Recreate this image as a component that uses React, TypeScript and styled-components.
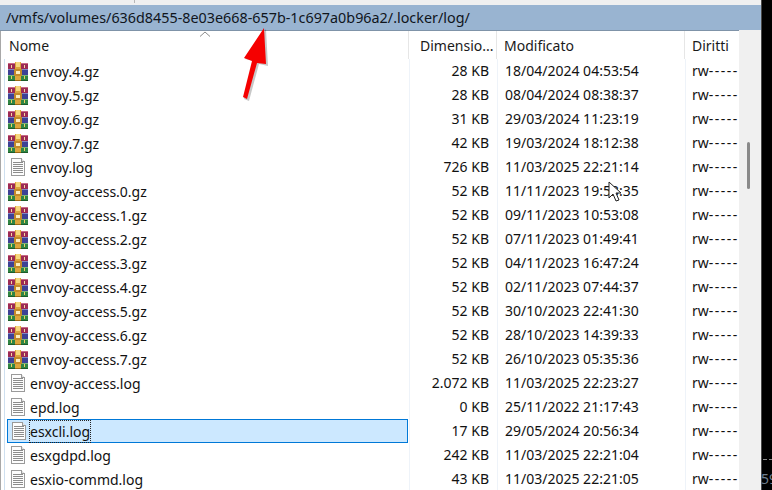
import React from 'react';
import styled, { createGlobalStyle } from 'styled-components';

const GlobalStyle = createGlobalStyle`
  html, body { margin: 0; padding: 0; background: #000; overflow: hidden; }
`;

const Screen = styled.div`
  position: relative;
  display: flex;
  width: 772px;
  height: 490px;
  overflow: hidden;
  background: #000;
  font-family: "Noto Sans", "Open Sans", sans-serif;
`;

const Win = styled.div`
  width: 761px;
  height: 490px;
  flex: none;
  display: flex;
  flex-direction: column;
  background: #f0f0f0;
`;

const EdgeLine = styled.div`
  width: 1px;
  flex: none;
  background: #4a4a4a;
`;

const TopStrip = styled.div`
  height: 5px;
  flex: none;
  padding-left: 134px;
  background: #f0f0f0;
  &::before {
    content: "";
    display: block;
    width: 1px;
    height: 3px;
    background: #b8b8b8;
  }
`;

const PathBar = styled.div`
  height: 26px;
  flex: none;
  padding-left: 6px;
  background: #99b4d1;
  color: #10151c;
  font-size: 14.35px;
  line-height: 26px;
  border-bottom: 1px solid #7f93a8;
  box-sizing: border-box;
`;

const List = styled.div`
  flex: 1;
  display: flex;
  min-height: 0;
  background: #fff;
  border-left: 1px solid #a8a8a8;
`;

const Table = styled.div`
  width: 738px;
  flex: none;
  overflow: hidden;
`;

const columns = '408px 88px 188px 54px';

const HeaderRow = styled.div`
  display: grid;
  grid-template-columns: ${columns};
  height: 28px;
  align-items: center;
  color: #1a1a1a;
  font-size: 14px;
`;

const HeadCell = styled.div<{ $pad: number; $last?: boolean }>`
  position: relative;
  height: 100%;
  line-height: 30px;
  padding-left: ${(p) => p.$pad}px;
  box-sizing: border-box;
  border-right: ${(p) => (p.$last ? 'none' : '1px solid #e6e6e6')};
  white-space: nowrap;
  overflow: hidden;
`;

const SortCaret = styled.svg`
  position: absolute;
  left: 198px;
  top: 0;
`;

const Rows = styled.div`
  margin-left: 3px;
  border-left: 1px solid #cfe0f0;
`;

const Row = styled.div`
  display: grid;
  grid-template-columns: 404px 88px 188px 54px;
  height: 24px;
  align-items: stretch;
  color: #111;
  font-size: 14px;
  line-height: 24px;
`;

const NameCell = styled.div<{ $selected?: boolean }>`
  display: flex;
  align-items: center;
  gap: 2px;
  height: 24px;
  margin: 0 1px 0 2px;
  padding-left: 1px;
  box-sizing: border-box;
  border: ${(p) => (p.$selected ? '1px solid #0078d7' : 'none')};
  background: ${(p) => (p.$selected ? '#cce8ff' : 'transparent')};
  white-space: nowrap;
`;

const NameText = styled.span<{ $focus?: boolean }>`
  outline: ${(p) => (p.$focus ? '1px dotted #222' : 'none')};
  line-height: 21px;
  margin-left: ${(p) => (p.$focus ? '-1px' : '0')};
`;

const SizeCell = styled.div`
  text-align: right;
  padding-right: 8px;
  border-left: 1px solid #eef3f9;
`;

const DateCell = styled.div`
  padding-left: 7px;
  white-space: nowrap;
  border-left: 1px solid #eef3f9;
`;

const PermCell = styled.div`
  padding-left: 6px;
  border-left: 1px solid #eef3f9;
  white-space: nowrap;
  overflow: hidden;
`;

const Dashes = styled.span`
  letter-spacing: 1.5px;
`;

const ScrollTrack = styled.div`
  width: 22px;
  flex: none;
  margin-top: -1px;
  padding-top: 112px;
  background: #f0f0f0;
`;

const ScrollThumb = styled.div`
  width: 3px;
  height: 47px;
  margin-left: 8px;
  border-radius: 2px;
  background: #8a8a8a;
`;

const Overlay = styled.svg`
  position: absolute;
  pointer-events: none;
`;

const EdgeDash = styled.div`
  position: absolute;
  left: 763px;
  top: 459px;
  width: 9px;
  height: 1px;
  background: repeating-linear-gradient(90deg, #8a8a8a 0 4px, transparent 4px 6px);
`;

const EdgeText = styled.div`
  position: absolute;
  left: 761px;
  top: 469px;
  color: #6f7f8f;
  font-size: 14px;
`;

const ArchiveIcon = () => (
  <svg width="20" height="19" viewBox="0 0 20 19" style={{ flex: 'none' }} shapeRendering="crispEdges">
    <rect x="0" y="1" width="20" height="6" fill="#9c2a55" />
    <rect x="0" y="1" width="20" height="1" fill="#c96a85" />
    <rect x="0" y="7" width="20" height="6" fill="#3d4296" />
    <rect x="0" y="7" width="20" height="1" fill="#8084c4" />
    <rect x="0" y="13" width="20" height="5" fill="#2f8544" />
    <rect x="0" y="13" width="20" height="1" fill="#78b87a" />
    <rect x="0" y="18" width="20" height="1" fill="#1c5c28" />
    <rect x="3" y="3" width="1" height="3" fill="#f3d9a0" />
    <rect x="3" y="14" width="1" height="3" fill="#f0d060" />
    <rect x="16" y="3" width="1" height="3" fill="#f3d9a0" />
    <rect x="16" y="14" width="1" height="3" fill="#f0d060" />
    <rect x="7" y="0" width="6" height="19" fill="#dca53c" />
    <rect x="8" y="0" width="4" height="5" fill="#f6d77e" />
    <rect x="6" y="7" width="8" height="7" fill="#c48a2a" />
    <rect x="8" y="9" width="4" height="3" fill="#fbeec0" />
    <rect x="7" y="18" width="6" height="1" fill="#9c6a14" />
  </svg>
);

const LogIcon = () => (
  <svg width="20" height="20" viewBox="0 0 20 20" style={{ flex: 'none' }} shapeRendering="crispEdges">
    <path d="M3.5 1.5H13.5L16.5 4.5V18.5H3.5Z" fill="#fdfdfd" stroke="#9a9a9a" />
    <path d="M13.5 1.5V4.5H16.5" fill="#e0e0e0" stroke="#9a9a9a" />
    {[5, 7, 9, 11, 13, 15].map((y) => (
      <rect key={y} x="5" y={y} width="10" height="1" fill="#8c8c8c" />
    ))}
  </svg>
);

type FileRow = { name: string; size: string; date: string; selected?: boolean };

const files: FileRow[] = [
  { name: 'envoy.4.gz', size: '28 KB', date: '18/04/2024 04:53:54' },
  { name: 'envoy.5.gz', size: '28 KB', date: '08/04/2024 08:38:37' },
  { name: 'envoy.6.gz', size: '31 KB', date: '29/03/2024 11:23:19' },
  { name: 'envoy.7.gz', size: '42 KB', date: '19/03/2024 18:12:38' },
  { name: 'envoy.log', size: '726 KB', date: '11/03/2025 22:21:14' },
  { name: 'envoy-access.0.gz', size: '52 KB', date: '11/11/2023 19:53:35' },
  { name: 'envoy-access.1.gz', size: '52 KB', date: '09/11/2023 10:53:08' },
  { name: 'envoy-access.2.gz', size: '52 KB', date: '07/11/2023 01:49:41' },
  { name: 'envoy-access.3.gz', size: '52 KB', date: '04/11/2023 16:47:24' },
  { name: 'envoy-access.4.gz', size: '52 KB', date: '02/11/2023 07:44:37' },
  { name: 'envoy-access.5.gz', size: '52 KB', date: '30/10/2023 22:41:30' },
  { name: 'envoy-access.6.gz', size: '52 KB', date: '28/10/2023 14:39:33' },
  { name: 'envoy-access.7.gz', size: '52 KB', date: '26/10/2023 05:35:36' },
  { name: 'envoy-access.log', size: '2.072 KB', date: '11/03/2025 22:23:27' },
  { name: 'epd.log', size: '0 KB', date: '25/11/2022 21:17:43' },
  { name: 'esxcli.log', size: '17 KB', date: '29/05/2024 20:56:34', selected: true },
  { name: 'esxgdpd.log', size: '242 KB', date: '11/03/2025 22:21:04' },
  { name: 'esxio-commd.log', size: '43 KB', date: '11/03/2025 22:21:05' },
];

export default function App() {
  return (
    <Screen>
      <GlobalStyle />
      <Win>
        <TopStrip />
        <PathBar>/vmfs/volumes/636d8455-8e03e668-657b-1c697a0b96a2/.locker/log/</PathBar>
        <List>
          <Table>
            <HeaderRow>
              <HeadCell $pad={8}>
                Nome
                <SortCaret width="12" height="7" viewBox="0 0 12 7">
                  <path d="M1 5.5L6 1L11 5.5" fill="none" stroke="#8c8c8c" />
                </SortCaret>
              </HeadCell>
              <HeadCell $pad={11}>Dimensio...</HeadCell>
              <HeadCell $pad={7}>Modificato</HeadCell>
              <HeadCell $pad={7} $last>Diritti</HeadCell>
            </HeaderRow>
            <Rows>
              {files.map((f) => (
                <Row key={f.name}>
                  <NameCell $selected={f.selected}>
                    {f.name.endsWith('.gz') ? <ArchiveIcon /> : <LogIcon />}
                    <NameText $focus={f.selected}>{f.name}</NameText>
                  </NameCell>
                  <SizeCell>{f.size}</SizeCell>
                  <DateCell>{f.date}</DateCell>
                  <PermCell>rw<Dashes>-----</Dashes></PermCell>
                </Row>
              ))}
            </Rows>
          </Table>
          <ScrollTrack>
            <ScrollThumb />
          </ScrollTrack>
        </List>
      </Win>
      <EdgeLine />
      <EdgeDash />
      <EdgeText>59</EdgeText>
      <Overlay width="40" height="80" viewBox="0 0 40 80" style={{ left: 235, top: 25 }}>
        <path d="M31 4L33 41L24 39L14 76L9 74L19 36L10 34Z" fill="#000" opacity="0.22" />
        <path d="M29 3L31 39L22 38L12 74L8 72L17 36L9 33Z" fill="#f50000" />
      </Overlay>
      <Overlay width="20" height="24" viewBox="0 0 20 24" style={{ left: 607, top: 181 }}>
        <path d="M2 1V17L6 13L9 20L12 19L9 12H14Z" fill="#fff" stroke="#222" />
      </Overlay>
    </Screen>
  );
}
